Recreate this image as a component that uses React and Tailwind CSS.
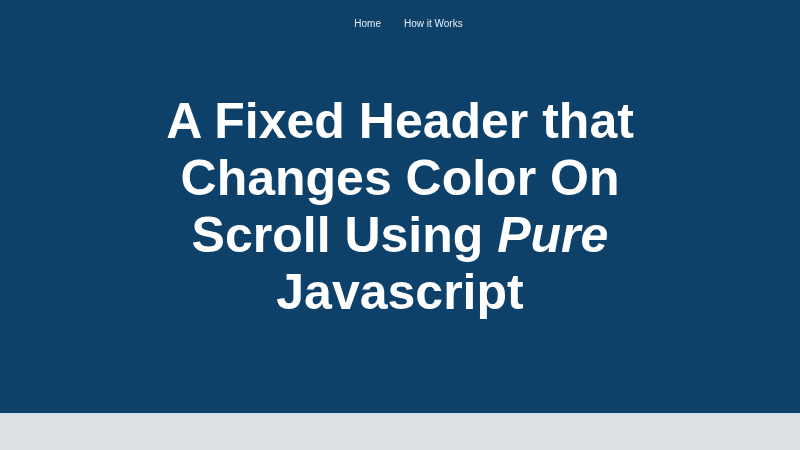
export default function App() {
  return (
    <div className="min-h-screen bg-[#dcdfe3]" style={{ fontFamily: '"Liberation Sans", Arial, sans-serif' }}>
      {/* Fixed header */}
      <header className="fixed top-0 inset-x-0 z-10">
        <nav className="flex justify-center gap-[23px] pt-[18px] pl-[17px] text-[10px] leading-[12px] text-[#e6edf4]">
          <a href="#">Home</a>
          <a href="#">How it Works</a>
        </nav>
      </header>

      {/* Hero */}
      <section className="h-[414px] bg-[#0e416a] flex items-center justify-center border-b border-[#c9dced]">
        <h1 className="text-white font-bold text-[50px] leading-[57px] text-center max-w-[520px]">
          A Fixed Header that Changes Color On Scroll Using <em>Pure</em> Javascript
        </h1>
      </section>
    </div>
  );
}
